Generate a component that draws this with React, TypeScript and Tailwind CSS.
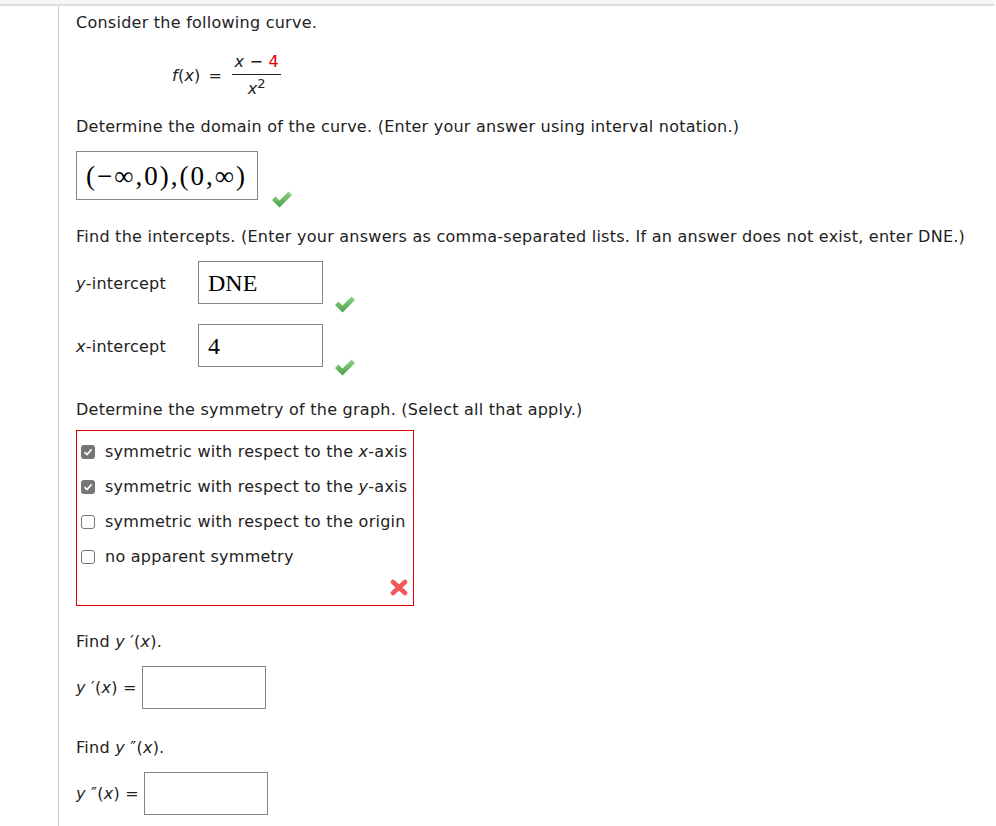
import React from 'react'

const font = { fontFamily: '"DejaVu Sans", Verdana, sans-serif' }

function GreenCheck({ className = '' }: { className?: string }) {
  return (
    <svg width="22" height="17" viewBox="0 0 22 17" className={className}>
      <defs>
        <linearGradient id="gc" x1="0" y1="0" x2="0" y2="1">
          <stop offset="0" stopColor="#8fd48a" />
          <stop offset="1" stopColor="#4aa145" />
        </linearGradient>
      </defs>
      <polygon points="1,9 4.5,5.5 8.5,9.5 17.5,0.5 21,4 8.5,16.5" fill="url(#gc)" />
    </svg>
  )
}

function RedX() {
  return (
    <svg width="18" height="17" viewBox="0 0 18 17">
      <path d="M3 3 L15 14 M15 3 L3 14" stroke="#f25757" strokeWidth="4.5" strokeLinecap="round" />
    </svg>
  )
}

function Box({ checked }: { checked?: boolean }) {
  if (checked)
    return (
      <span className="flex h-[14px] w-[14px] items-center justify-center rounded-[3px] bg-[#767676]">
        <svg width="10" height="10" viewBox="0 0 10 10">
          <path d="M1.5 5.2 L4 7.6 L8.6 2.4" stroke="white" strokeWidth="1.6" fill="none" />
        </svg>
      </span>
    )
  return <span className="h-[14px] w-[14px] rounded-[3px] border border-[#767676] bg-white" />
}

function AnswerBox({ children, className = '' }: { children?: React.ReactNode; className?: string }) {
  return (
    <div
      className={`flex shrink-0 items-center border border-[#858585] bg-white px-[9px] text-[24px] tracking-normal text-black ${className}`}
      style={{ fontFamily: '"Liberation Serif", "Times New Roman", serif' }}
    >
      {children}
    </div>
  )
}

const I = ({ children }: { children: React.ReactNode }) => <i className="italic">{children}</i>

export default function App() {
  const rows: [boolean, React.ReactNode][] = [
    [true, <>symmetric with respect to the <I>x</I>-axis</>],
    [true, <>symmetric with respect to the <I>y</I>-axis</>],
    [false, <>symmetric with respect to the origin</>],
    [false, <>no apparent symmetry</>],
  ]

  return (
    <div
      className="h-[826px] w-[996px] overflow-hidden bg-white text-[16px] leading-[20px] tracking-[0.25px] text-[#222]"
      style={font}
    >
      <div className="h-[6px] w-[995px] border-b-2 border-[#dedede] bg-[#f6f6f6]" />
      <div className="flex min-h-[820px]">
        <div className="w-[59px] shrink-0 border-r border-[#cfcfcf]" />
        <div className="flex flex-col pl-[17px] [&>*]:shrink-0">
          <p className="mt-[7px]">Consider the following curve.</p>

          <div className="mt-[19px] flex items-center pl-[96px]">
            <span>
              <I>f</I>(<I>x</I>)
            </span>
            <span className="ml-[8px] mr-[10px]">=</span>
            <span className="flex flex-col items-center">
              <span className="px-[2px]">
                <I>x</I> − <span className="text-[#e00000]">4</span>
              </span>
              <span className="my-[2px] h-px w-[49px] bg-[#222]" />
              <span className="mt-[2px] leading-[20px]">
                <I>x</I>
                <span className="relative top-[-6px] text-[13px] leading-none">2</span>
              </span>
            </span>
          </div>

          <p className="mt-[18px]">Determine the domain of the curve. (Enter your answer using interval notation.)</p>

          <div className="mt-[14px] flex items-end">
            <AnswerBox className="h-[49px] w-[182px] !text-[27px] !tracking-[2px]">(−∞,0),(0,∞)</AnswerBox>
            <GreenCheck className="ml-[13px] -mb-[8px]" />
          </div>

          <p className="mt-[27px]">
            Find the intercepts. (Enter your answers as comma-separated lists. If an answer does not exist, enter DNE.)
          </p>

          <div className="mt-[14px] flex items-end">
            <span className="mb-[10px] w-[122px]">
              <I>y</I>-intercept
            </span>
            <AnswerBox className="h-[43px] w-[125px]">DNE</AnswerBox>
            <GreenCheck className="ml-[11px] -mb-[9px]" />
          </div>

          <div className="mt-[20px] flex items-end">
            <span className="mb-[10px] w-[122px]">
              <I>x</I>-intercept
            </span>
            <AnswerBox className="h-[43px] w-[125px]">4</AnswerBox>
            <GreenCheck className="ml-[11px] -mb-[9px]" />
          </div>

          <p className="mt-[33px]">Determine the symmetry of the graph. (Select all that apply.)</p>

          <div className="mt-[10px] flex h-[176px] w-[338px] flex-col border border-[#e00000] pl-[4px] pt-[5px]">
            {rows.map(([c, label], i) => (
              <div key={i} className="flex h-[35px] items-center gap-[10px] pb-[4px]">
                <Box checked={c} />
                <span>{label}</span>
              </div>
            ))}
            <div className="mr-[5px] mt-[3px] flex justify-end">
              <RedX />
            </div>
          </div>

          <p className="mt-[26px]">
            Find <I>y</I> ′(<I>x</I>).
          </p>
          <div className="mt-[14px] flex items-center">
            <span className="w-[66px]">
              <I>y</I> ′(<I>x</I>) =
            </span>
            <AnswerBox className="h-[43px] w-[124px]" />
          </div>

          <p className="mt-[29px]">
            Find <I>y</I> ″(<I>x</I>).
          </p>
          <div className="mt-[14px] flex items-center">
            <span className="w-[68px]">
              <I>y</I> ″(<I>x</I>) =
            </span>
            <AnswerBox className="h-[43px] w-[124px]" />
          </div>
        </div>
      </div>
    </div>
  )
}
